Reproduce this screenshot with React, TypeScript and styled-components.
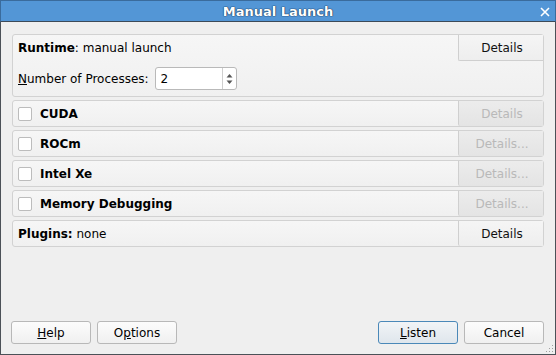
import styled, { createGlobalStyle } from "styled-components";

const Global = createGlobalStyle`
  html, body { margin: 0; padding: 0; background: #efefef; }
  body { font-family: "DejaVu Sans", "Liberation Sans", sans-serif; font-size: 12px; color: #000; }
`;

const Window = styled.div`
  width: 556px;
  height: 355px;
  box-sizing: border-box;
  border: 1px solid #4b5157;
  border-top: none;
  background: #efefef;
  display: flex;
  flex-direction: column;
  position: relative;
`;

const TitleBar = styled.div`
  height: 22px;
  margin: 0 -1px;
  box-sizing: border-box;
  border: 1px solid #3a6b9c;
  border-bottom: 1px solid #3d4a58;
  background: #5396d6;
  display: flex;
  align-items: center;
  justify-content: center;
  position: relative;
  color: #fff;
  font-weight: bold;
  font-size: 13px;
  text-shadow: 0 0 1px #1d3b5c, 0 0 1px #1d3b5c, 0 0 1px #1d3b5c;
`;

const Close = styled.svg`
  position: absolute;
  right: 5px;
  top: 6px;
`;

const Body = styled.div`
  flex: 1;
  display: flex;
  flex-direction: column;
  padding: 12px 11px 10px 10px;
`;

const Stack = styled.div`
  display: flex;
  flex-direction: column;
  gap: 3px;
  margin-left: 1px;
`;

const Panel = styled.div<{ $tall?: boolean }>`
  height: ${({ $tall }) => ($tall ? "63px" : "27px")};
  box-sizing: border-box;
  border: 1px solid #d2d2d2;
  border-radius: 3px;
  background: linear-gradient(#f6f6f6, #f0f0f0);
  display: flex;
  align-items: flex-start;
`;

const PanelMain = styled.div`
  flex: 1;
  display: flex;
  flex-direction: column;
  padding-left: 5px;
`;

const Line = styled.div`
  height: 25px;
  display: flex;
  align-items: center;
  gap: 7px;
`;

const SpinLine = styled(Line)`
  margin-top: 6px;
  gap: 6px;
`;

const DetailsButton = styled.div<{ $disabled?: boolean; $tall?: boolean }>`
  width: 85px;
  height: ${({ $tall }) => ($tall ? "26px" : "25px")};
  box-sizing: border-box;
  border-left: 1px solid #cfcfcf;
  border-bottom: ${({ $tall }) => ($tall ? "1px solid #cfcfcf" : "none")};
  border-bottom-left-radius: 2px;
  background: ${({ $disabled }) =>
    $disabled ? "linear-gradient(#ececec, #e4e4e4)" : "linear-gradient(#f5f5f5, #eeeeee)"};
  color: ${({ $disabled }) => ($disabled ? "#b9b9b9" : "#111")};
  display: flex;
  align-items: center;
  justify-content: center;
  padding-left: 2px;
`;

const Check = styled.div`
  width: 14px;
  height: 14px;
  box-sizing: border-box;
  border: 1px solid #bcbcbc;
  border-radius: 2px;
  background: #fff;
`;

const CheckLabel = styled.span`
  font-weight: bold;
  margin-left: 1px;
`;

const Spin = styled.div`
  width: 82px;
  height: 23px;
  box-sizing: border-box;
  border: 1px solid #b9b9b9;
  border-radius: 3px;
  background: #fff;
  display: flex;
`;

const SpinValue = styled.div`
  flex: 1;
  padding-left: 5px;
  display: flex;
  align-items: center;
`;

const SpinArrows = styled.div`
  width: 13px;
  border-left: 1px solid #cfcfcf;
  display: flex;
  align-items: center;
  justify-content: center;
`;

const Footer = styled.div`
  margin-top: auto;
  display: flex;
  align-items: center;
  gap: 6px;
`;

const Spacer = styled.div`
  flex: 1;
`;

const Button = styled.div<{ $default?: boolean }>`
  width: 80px;
  height: 23px;
  box-sizing: border-box;
  border: 1px solid ${({ $default }) => ($default ? "#4a88b8" : "#b8b8b8")};
  border-radius: 3px;
  background: ${({ $default }) =>
    $default ? "linear-gradient(#f1f4f7, #dfe6ec)" : "linear-gradient(#fcfcfc, #f0f0f0)"};
  display: flex;
  align-items: center;
  justify-content: center;
  font-size: 12px;
`;

const Grip = styled.svg`
  position: absolute;
  right: 1px;
  bottom: 1px;
`;

const rows = [
  { label: "CUDA", details: "Details" },
  { label: "ROCm", details: "Details..." },
  { label: "Intel Xe", details: "Details..." },
  { label: "Memory Debugging", details: "Details..." },
];

export default function App() {
  return (
    <>
      <Global />
      <Window>
        <TitleBar>
          Manual Launch
          <Close width="10" height="10" viewBox="0 0 10 10">
            <path d="M1 1 L9 9 M9 1 L1 9" stroke="#fff" strokeWidth="1.6" />
          </Close>
        </TitleBar>
        <Body>
          <Stack>
            <Panel $tall>
              <PanelMain>
                <Line>
                  <span>
                    <b>Runtime</b>: manual launch
                  </span>
                </Line>
                <SpinLine>
                  <span>
                    <u>N</u>umber of Processes:
                  </span>
                  <Spin>
                    <SpinValue>2</SpinValue>
                    <SpinArrows>
                      <svg width="7" height="12" viewBox="0 0 7 12">
                        <path d="M0.5 4.5 L3.5 1 L6.5 4.5 Z" fill="#555" />
                        <path d="M0.5 7.5 L3.5 11 L6.5 7.5 Z" fill="#555" />
                      </svg>
                    </SpinArrows>
                  </Spin>
                </SpinLine>
              </PanelMain>
              <DetailsButton $tall>Details</DetailsButton>
            </Panel>
            {rows.map((r) => (
              <Panel key={r.label}>
                <PanelMain>
                  <Line>
                    <Check />
                    <CheckLabel>{r.label}</CheckLabel>
                  </Line>
                </PanelMain>
                <DetailsButton $disabled>{r.details}</DetailsButton>
              </Panel>
            ))}
            <Panel>
              <PanelMain>
                <Line>
                  <span>
                    <b>Plugins:</b> none
                  </span>
                </Line>
              </PanelMain>
              <DetailsButton>Details</DetailsButton>
            </Panel>
          </Stack>
          <Footer>
            <Button>
              <u>H</u>elp
            </Button>
            <Button>
              O<u>p</u>tions
            </Button>
            <Spacer />
            <Button $default>
              <u>L</u>isten
            </Button>
            <Button>Cancel</Button>
          </Footer>
        </Body>
        <Grip width="10" height="10" viewBox="0 0 10 10">
          {[
            [8, 2], [8, 5], [8, 8], [5, 5], [5, 8], [2, 8],
          ].map(([x, y]) => (
            <rect key={`${x}-${y}`} x={x} y={y} width="1" height="1" fill="#a0a0a0" />
          ))}
        </Grip>
      </Window>
    </>
  );
}
